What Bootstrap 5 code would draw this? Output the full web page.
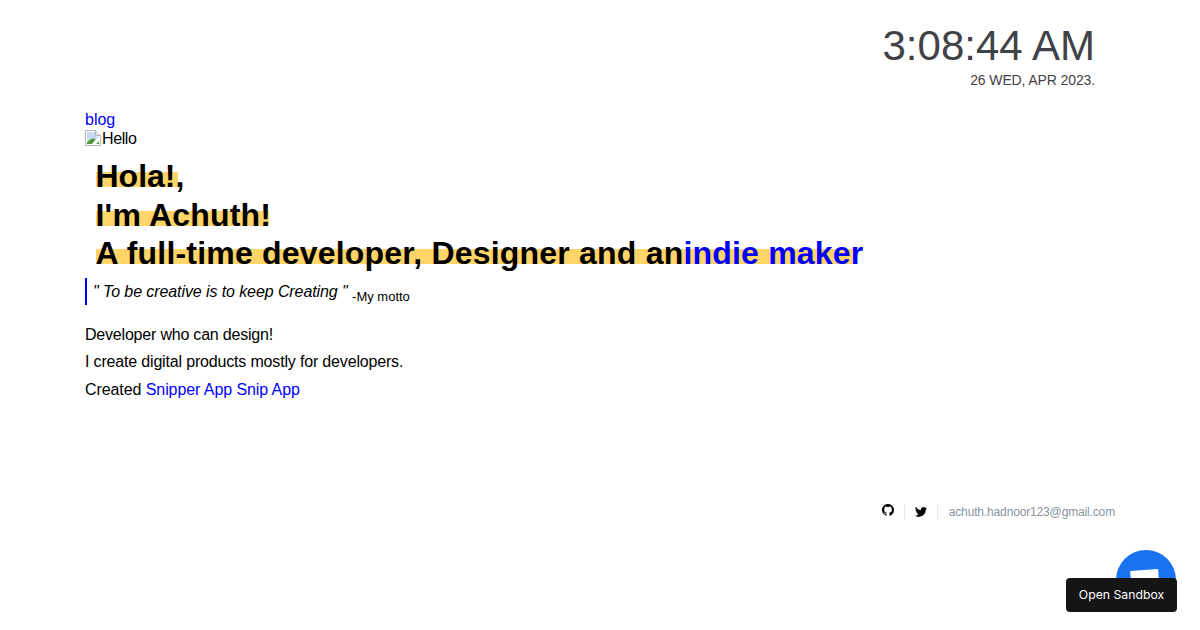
<!DOCTYPE html>
<html lang="en">

<head>
    <meta charset="UTF-8" />
    <meta name="viewport" content="width=device-width, initial-scale=1.0" />
    <title>Achuth</title>
    <link href="https://cdn.jsdelivr.net/npm/bootstrap@5.3.3/dist/css/bootstrap.min.css" rel="stylesheet">
    <style>
        html, body { height: 100%; }
        body { font-family: "Liberation Sans", Arial, sans-serif; color: #000; overflow: hidden; background: #fff; }
        a { color: #00f; text-decoration: none; }
        .page-wrap { padding: 0 105px 0 85px; height: 630px; }
        .clock-box { padding-top: 20px; height: 110px; color: #3f4347; line-height: 1.2; }
        .clock-time { font-size: 42px; line-height: 52px; }
        .clock-date { font-size: 14px; line-height: 17px; letter-spacing: -.12px; }
        .blog-link { font-size: 16px; line-height: 19px; }
        .img-alt { line-height: 19px; font-size: 16px; letter-spacing: -.4px; }
        .broken-img { width: 16px; height: 16px; vertical-align: -2px; margin-right: 1px; }
        .hero-title { font-size: 32px; font-weight: 700; line-height: 38.5px; letter-spacing: .2px; margin: 9px 0 0 10.5px; }
        .hl { background: linear-gradient(#ffd469, #ffd469) no-repeat 0 14px / 100% 15px; }
        .hl-first { letter-spacing: 0; padding-right: 2px; margin-right: -2px; }
        .hl-second { background-size: calc(100% - 2px) 15px; }
        .hl-end { background-size: calc(100% - 6px) 15px; }
        .motto { border-left: 2px solid #00f; margin: 5px 0 0; padding-left: 6px; height: 27px; font-size: 16px; line-height: 28px; }
        .motto em { letter-spacing: -.09px; }
        .motto-by { font-size: 13px; font-style: normal; vertical-align: -4px; }
        .about { margin-top: 16px; }
        .about p { margin: 0; font-size: 16px; line-height: 27.5px; }
        .about p:nth-child(1) { letter-spacing: -.2px; }
        .about p:nth-child(2) { letter-spacing: -.17px; }
        .about p:nth-child(3) { letter-spacing: -.08px; }
        .social-row { position: absolute; top: 504px; right: 85px; height: 16px; font-size: 12px; gap: 10px; }
        .social-row a { color: #000; display: flex; }
        .social-sep { width: 1px; height: 14px; background: #e6e6e6; }
        .gh-link { margin-bottom: 4px; }
        .tw-link { margin-bottom: 1px; }
        .social-row .mail-link { color: #8a949e; letter-spacing: -.15px; margin-left: 1px; }
        .sandbox-fab { position: absolute; left: 1116px; top: 550px; width: 60px; height: 60px; border-radius: 50%; background: #1a73f0; overflow: hidden; }
        .sandbox-fab i { position: absolute; left: 15px; top: 20px; width: 28px; height: 24px; background: #fff; transform: rotate(-4deg); }
        .sandbox-tip { position: absolute; left: 1066px; top: 578px; width: 111px; height: 34px; border-radius: 4px; background: #151515; color: #fff; font-family: Inter, sans-serif; font-size: 12.25px; line-height: 34px; text-align: center; }
    </style>
</head>

<body>

    <div class="page-wrap">
        <div class="clock-box text-end">
            <div class="clock-time">3:08:44 AM</div>
            <div class="clock-date">26 WED, APR 2023.</div>
        </div>

        <div class="blog-link"><a href="#">blog</a></div>
        <div class="img-alt">
            <svg class="broken-img" viewBox="0 0 16 16">
                <path d="M.5.5h10l5 5v10H.5z" fill="#fff" stroke="#b5b5b5" />
                <path d="M10.5.5v5h5" fill="#e8e8e8" stroke="#b5b5b5" />
                <path d="M2 2h8v4l4 1v1l-12 2z" fill="#c9daf8" />
                <path d="M2 14v-2c3-4 7-4 9-3l-4 5z" fill="#4f9a3a" />
                <path d="M11 14l3-3v3z" fill="#4f9a3a" />
            </svg>Hello
        </div>

        <h1 class="hero-title">
            <span class="hl hl-first">Hola!</span>,<br>
            <span class="hl hl-second">I'm Achuth!</span><br>
            <span class="hl hl-end">A full-time developer, Designer and an<a href="#">indie maker</a></span>
        </h1>

        <blockquote class="motto"><em>" To be creative is to keep Creating "</em> <span class="motto-by">-My motto</span></blockquote>

        <div class="about">
            <p>Developer who can design!</p>
            <p>I create digital products mostly for developers.</p>
            <p>Created <a href="#">Snipper App</a> <a href="#">Snip App</a></p>
        </div>

        <div class="social-row d-flex align-items-center">
            <a class="gh-link" href="#">
                <svg width="12" height="12" viewBox="0 0 16 16" fill="currentColor"><path d="M8 0C3.58 0 0 3.58 0 8c0 3.54 2.29 6.53 5.47 7.59.4.07.55-.17.55-.38 0-.19-.01-.82-.01-1.49-2.01.37-2.53-.49-2.69-.94-.09-.23-.48-.94-.82-1.13-.28-.15-.68-.52-.01-.53.63-.01 1.08.58 1.23.82.72 1.21 1.87.87 2.33.66.07-.52.28-.87.51-1.07-1.78-.2-3.64-.89-3.64-3.95 0-.87.31-1.59.82-2.15-.08-.2-.36-1.02.08-2.12 0 0 .67-.21 2.2.82.64-.18 1.32-.27 2-.27s1.36.09 2 .27c1.53-1.04 2.2-.82 2.2-.82.44 1.1.16 1.92.08 2.12.51.56.82 1.27.82 2.15 0 3.07-1.87 3.75-3.65 3.95.29.25.54.73.54 1.48 0 1.07-.01 1.93-.01 2.2 0 .21.15.46.55.38A8.01 8.01 0 0 0 16 8c0-4.42-3.58-8-8-8z"/></svg>
            </a>
            <span class="social-sep"></span>
            <a class="tw-link" href="#">
                <svg width="12" height="12" viewBox="0 0 16 16" fill="currentColor"><path d="M5.03 14.5c6.04 0 9.34-5 9.34-9.34 0-.14 0-.28-.01-.42A6.67 6.67 0 0 0 16 3.04a6.56 6.56 0 0 1-1.89.52 3.3 3.3 0 0 0 1.45-1.82 6.57 6.57 0 0 1-2.08.8 3.28 3.28 0 0 0-5.6 2.99A9.32 9.32 0 0 1 1.11 1.1a3.28 3.28 0 0 0 1.02 4.38A3.26 3.26 0 0 1 .64 5.07v.04a3.28 3.28 0 0 0 2.63 3.22 3.28 3.28 0 0 1-1.48.06 3.29 3.29 0 0 0 3.07 2.28A6.59 6.59 0 0 1 0 13.03a9.29 9.29 0 0 0 5.03 1.47"/></svg>
            </a>
            <span class="social-sep"></span>
            <a class="mail-link" href="#">achuth.hadnoor123@gmail.com</a>
        </div>
    </div>

    <div class="sandbox-fab"><i></i></div>
    <div class="sandbox-tip">Open Sandbox</div>

    <script src="https://cdn.jsdelivr.net/npm/bootstrap@5.3.3/dist/js/bootstrap.bundle.min.js"></script>
</body>

</html>
